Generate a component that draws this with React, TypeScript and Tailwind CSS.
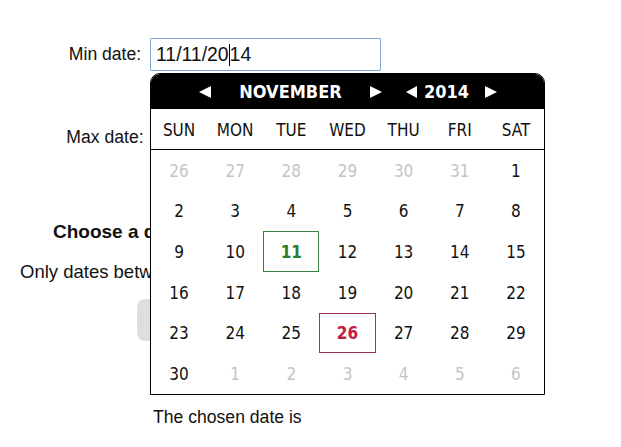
import React from "react";

type Day = { n: number; muted?: boolean; kind?: "min" | "max" };

const days: Day[] = [
  ...[26, 27, 28, 29, 30, 31].map((n) => ({ n, muted: true })),
  ...Array.from({ length: 29 }, (_, i) => ({ n: i + 1 } as Day)),
  { n: 30 },
  ...[1, 2, 3, 4, 5, 6].map((n) => ({ n, muted: true })),
].map((d) => {
  if (!d.muted && d.n === 11) return { ...d, kind: "min" as const };
  if (!d.muted && d.n === 26) return { ...d, kind: "max" as const };
  return d;
});

const names = ["SUN", "MON", "TUE", "WED", "THU", "FRI", "SAT"];

function TriLeft({ w = 12 }: { w?: number }) {
  return (
    <svg width={w} height={12} viewBox={`0 0 ${w} 12`} className="block shrink-0">
      <polygon points={`${w},0 ${w},12 0,6`} fill="white" />
    </svg>
  );
}

function TriRight({ w = 12 }: { w?: number }) {
  return (
    <svg width={w} height={12} viewBox={`0 0 ${w} 12`} className="block shrink-0">
      <polygon points={`0,0 0,12 ${w},6`} fill="white" />
    </svg>
  );
}

function Calendar() {
  return (
    <div className="absolute left-0 top-[35px] z-10 w-[395px] bg-white border border-black rounded-t-[10px] font-['DejaVu_Sans_Condensed','DejaVu_Sans',sans-serif] text-[#111]">
      <div className="h-[35px] bg-black rounded-t-[9px] flex items-center pl-[48px] text-white font-bold text-[18px]">
        <TriLeft />
        <div className="w-[159px] text-center leading-none">NOVEMBER</div>
        <TriRight />
        <div className="ml-[24px]">
          <TriLeft w={11} />
        </div>
        <div className="w-[59px] text-center leading-none">2014</div>
        <div className="ml-[9px]">
          <TriRight />
        </div>
      </div>
      <div className="h-[41px] pt-[3px] grid grid-cols-7 items-center border-b border-black text-[17px]">
        {names.map((n) => (
          <div key={n} className="text-center leading-none">
            {n}
          </div>
        ))}
      </div>
      <div className="h-[244px] grid grid-cols-7 grid-rows-6">
        {days.map((d, i) => {
          let cls = "flex items-center justify-center pt-[2px] text-[17px] leading-none";
          if (d.muted) cls += " text-[#c4c4c4]";
          else if (d.kind === "min") cls += " border border-[#3d803d] text-[#2a7d2a] font-bold";
          else if (d.kind === "max") cls += " border border-[#a0325a] text-[#c61a44] font-bold";
          return (
            <div key={i} className={cls}>
              {d.n}
            </div>
          );
        })}
      </div>
    </div>
  );
}

export default function App() {
  return (
    <div className="relative w-[621px] h-[447px] overflow-hidden bg-white font-['Liberation_Sans',Arial,sans-serif] text-[#111]">
      <div className="pt-[38px]">
        <div className="flex items-center h-[33px] pl-[60px]">
          <div className="w-[90px] text-center text-[17.6px] leading-none">Min date:</div>
          <div className="relative">
            <div className="w-[231px] h-[33px] border border-[#7ea7d8] rounded-[1px] pl-[5px] flex items-center text-[19.4px] leading-none text-[#111]">
              <span>11/11/20</span>
              <span className="inline-block w-px h-[22px] bg-black" />
              <span>14</span>
            </div>
            <Calendar />
          </div>
        </div>
        <div className="flex items-center h-[33px] mt-[50px] pl-[60px]">
          <div className="w-[90px] text-center text-[17.6px] leading-none">Max date:</div>
          <div className="w-[231px] h-[33px] border border-[#a9a9a9]" />
        </div>
        <div className="mt-[66px] ml-[53px] w-[97px] overflow-hidden whitespace-nowrap text-[19px] font-bold leading-[24px]">
          Choose a date
        </div>
        <div className="mt-[16px] ml-[20px] w-[130px] overflow-hidden whitespace-nowrap text-[18.5px] leading-[24px]">
          Only dates between
        </div>
        <div className="mt-[15px] pl-[137px]">
          <div className="w-[160px] h-[42px] rounded-[8px] bg-[#dedede]" />
        </div>
        <div className="mt-[64px] pl-[153px] text-[17.6px] leading-[24px]">The chosen date is</div>
      </div>
    </div>
  );
}
